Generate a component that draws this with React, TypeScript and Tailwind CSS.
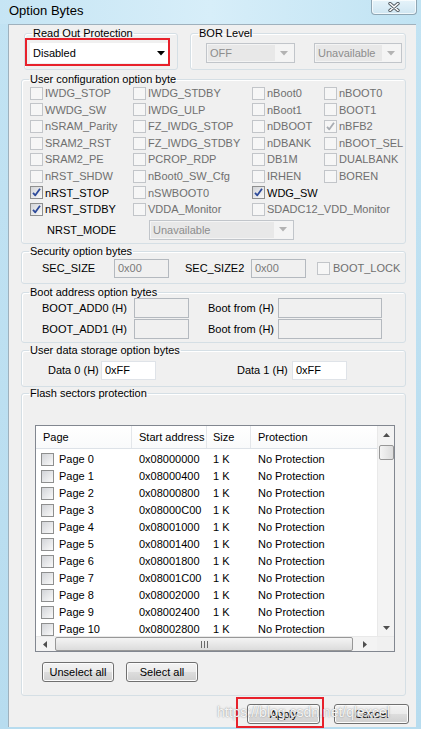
import React from 'react';

type CheckProps = { on?: boolean; off?: boolean };

function Check({ on = false, off = false }: CheckProps) {
  return (
    <span
      className={`relative inline-flex h-[13px] w-[13px] shrink-0 items-center justify-center border ${
        off ? 'border-[#c2c5c9] bg-[#f6f6f6]' : 'border-[#8e8f8f] bg-gradient-to-br from-[#d2d4d8] to-[#fafafa]'
      }`}
    >
      {on && (
        <svg width="11" height="11" viewBox="0 0 11 11" className="absolute">
          <path
            d="M2 5.8 L4.3 8.3 L9 1.8"
            fill="none"
            stroke={off ? '#a8acb2' : '#2d4a9a'}
            strokeWidth="1.8"
            strokeLinejoin="round"
          />
        </svg>
      )}
    </span>
  );
}

function Arrow({ color = '#000' }: { color?: string }) {
  return (
    <svg width="8" height="5" viewBox="0 0 8 5">
      <polygon points="0,0 8,0 4,4.5" fill={color} />
    </svg>
  );
}

function Combo({ text, off = false, className = '' }: { text: string; off?: boolean; className?: string }) {
  if (off) {
    return (
      <div className={`flex h-[20px] items-stretch border border-[#c1c5ca] bg-[#f4f4f4] p-[1px] ${className}`}>
        <div className="flex flex-1 items-center bg-[#e8e8e8] pl-[2px] text-[#8d8d8d]">{text}</div>
        <div className="flex w-[18px] items-center justify-center">
          <Arrow color="#b3b3b3" />
        </div>
      </div>
    );
  }
  return (
    <div className={`flex h-[20px] items-center bg-white pl-[3px] ${className}`}>
      <span className="flex-1">{text}</span>
      <div className="flex w-[14px] items-center justify-center">
        <Arrow />
      </div>
    </div>
  );
}

function Box({ text = '', white = false, className = '' }: { text?: string; white?: boolean; className?: string }) {
  return (
    <div
      className={`flex h-[19px] items-center border pl-[3px] ${
        white ? 'border-[#dfe3e8] bg-white text-black' : 'border-[#b4b9bf] bg-[#f0f0f0] text-[#7a7a7a]'
      } ${className}`}
    >
      {text}
    </div>
  );
}

function Group({ title, className = '', children }: { title: string; className?: string; children?: React.ReactNode }) {
  return (
    <fieldset className={`rounded-[3px] border border-[#d5dfe5] shadow-[inset_1px_1px_0_#ffffff] ${className}`}>
      <legend className="ml-[7px] px-[1px] text-[11px] leading-[12px] text-black">{title}</legend>
      {children}
    </fieldset>
  );
}

function Btn({ label, className = '' }: { label: string; className?: string }) {
  return (
    <button
      className={`flex h-[20px] items-center justify-center rounded-[3px] border border-[#707070] bg-[linear-gradient(#f3f3f3_0%,#ebebeb_50%,#dddddd_51%,#cfcfcf_100%)] text-[11px] text-black shadow-[inset_0_0_0_1px_#fcfcfc] ${className}`}
    >
      {label}
    </button>
  );
}

type Opt = { t: string; on?: boolean; off?: boolean; span?: boolean } | null;

const userRows: Opt[][] = [
  [{ t: 'IWDG_STOP', off: true }, { t: 'IWDG_STDBY', off: true }, { t: 'nBoot0', off: true }, { t: 'nBOOT0', off: true }],
  [{ t: 'WWDG_SW', off: true }, { t: 'IWDG_ULP', off: true }, { t: 'nBoot1', off: true }, { t: 'BOOT1', off: true }],
  [{ t: 'nSRAM_Parity', off: true }, { t: 'FZ_IWDG_STOP', off: true }, { t: 'nDBOOT', off: true }, { t: 'nBFB2', off: true, on: true }],
  [{ t: 'SRAM2_RST', off: true }, { t: 'FZ_IWDG_STDBY', off: true }, { t: 'nDBANK', off: true }, { t: 'nBOOT_SEL', off: true }],
  [{ t: 'SRAM2_PE', off: true }, { t: 'PCROP_RDP', off: true }, { t: 'DB1M', off: true }, { t: 'DUALBANK', off: true }],
  [{ t: 'nRST_SHDW', off: true }, { t: 'nBoot0_SW_Cfg', off: true }, { t: 'IRHEN', off: true }, { t: 'BOREN', off: true }],
  [{ t: 'nRST_STOP', on: true }, { t: 'nSWBOOT0', off: true }, { t: 'WDG_SW', on: true }, null],
  [{ t: 'nRST_STDBY', on: true }, { t: 'VDDA_Monitor', off: true }, { t: 'SDADC12_VDD_Monitor', off: true, span: true }],
];

const pages = Array.from({ length: 11 }, (_, i) => ({
  name: `Page ${i}`,
  addr: '0x' + (0x08000000 + i * 0x400).toString(16).toUpperCase().padStart(8, '0'),
}));

function OptCell({ o }: { o: Opt }) {
  if (!o) return <div />;
  return (
    <div className={`flex items-center gap-[2px] ${o.span ? 'col-span-2' : ''}`}>
      <Check on={o.on} off={o.off} />
      <span className={o.off ? 'whitespace-nowrap text-[#6f6f6f]' : 'whitespace-nowrap text-black'}>{o.t}</span>
    </div>
  );
}

function PageList() {
  return (
    <div className="flex h-[227px] w-[360px] flex-col border border-[#828790] bg-white">
      <div className="flex h-[210px]">
        <div className="w-[341px] overflow-hidden">
          <div className="grid h-[23px] grid-cols-[96px_75px_44px_1fr] border-b border-[#dde2e8] bg-gradient-to-b from-white to-[#f9fafb]">
            <div className="flex items-center border-r border-[#e3e6ea] pl-[7px]">Page</div>
            <div className="flex items-center border-r border-[#e3e6ea] pl-[7px]">Start address</div>
            <div className="flex items-center border-r border-[#e3e6ea] pl-[6px]">Size</div>
            <div className="flex items-center pl-[7px]">Protection</div>
          </div>
          <div className="pt-[2px]">
            {pages.map((p) => (
              <div key={p.name} className="grid h-[17px] grid-cols-[96px_75px_44px_1fr] items-center">
                <div className="flex items-center gap-[5px] pl-[5px]">
                  <Check />
                  <span>{p.name}</span>
                </div>
                <div className="pl-[7px]">{p.addr}</div>
                <div className="pl-[6px]">1 K</div>
                <div className="pl-[7px]">No Protection</div>
              </div>
            ))}
          </div>
        </div>
        <div className="flex w-[17px] flex-col items-center border-l border-[#e9e9e9] bg-[#f3f3f3]">
          <div className="flex h-[17px] items-center justify-center">
            <svg width="7" height="4" viewBox="0 0 7 4">
              <polygon points="0,4 7,4 3.5,0" fill="#4f4f4f" />
            </svg>
          </div>
          <div className="mt-[2px] h-[15px] w-[15px] rounded-[2px] border border-[#979797] bg-gradient-to-r from-[#f4f4f4] to-[#dcdcdc]" />
          <div className="flex-1" />
          <div className="flex h-[17px] items-center justify-center">
            <svg width="7" height="4" viewBox="0 0 7 4">
              <polygon points="0,0 7,0 3.5,4" fill="#4f4f4f" />
            </svg>
          </div>
        </div>
      </div>
      <div className="flex h-[15px] border-t border-[#e9e9e9] bg-[#f3f3f3]">
        <div className="flex w-[341px] items-center">
          <div className="flex w-[17px] items-center justify-center">
            <svg width="4" height="7" viewBox="0 0 4 7">
              <polygon points="4,0 4,7 0,3.5" fill="#4f4f4f" />
            </svg>
          </div>
          <div className="ml-[2px] flex h-[14px] w-[298px] items-center justify-center rounded-[2px] border border-[#979797] bg-gradient-to-b from-[#f4f4f4] to-[#dcdcdc]">
            <div className="flex gap-[2px]">
              <span className="h-[7px] w-[1px] bg-[#6b6b6b]" />
              <span className="h-[7px] w-[1px] bg-[#6b6b6b]" />
              <span className="h-[7px] w-[1px] bg-[#6b6b6b]" />
            </div>
          </div>
          <div className="flex flex-1 items-center justify-center">
            <svg width="4" height="7" viewBox="0 0 4 7">
              <polygon points="0,0 0,7 4,3.5" fill="#4f4f4f" />
            </svg>
          </div>
        </div>
        <div className="flex-1 bg-[#f0f0f0]" />
      </div>
    </div>
  );
}

export default function App() {
  return (
    <div className="relative h-[729px] w-[421px] overflow-hidden bg-gradient-to-b from-[#c2e3f3] to-[#b7dcef] font-['Liberation_Sans',Arial,sans-serif] text-[11px] text-black">
      {/* title bar */}
      <div className="flex h-[24px] items-start justify-between bg-gradient-to-r from-[#c6e5f4] via-[#d7eef9] to-[#c0e3f3]">
        <span className="pl-[9px] pt-[3px] text-[13px] leading-[16px] text-black">Option Bytes</span>
        <div className="mr-[4px] flex h-[15px] w-[46px] items-center justify-center rounded-b-[4px] border-x border-b border-[#8fa6b4] bg-gradient-to-b from-[#e6f3fa] to-[#cfe6f2] shadow-[inset_0_0_0_1px_rgba(255,255,255,0.7)]">
          <svg width="12" height="10" viewBox="0 0 12 10">
            <path d="M2 1.5 L10 8.5 M10 1.5 L2 8.5" stroke="#535b62" strokeWidth="3.4" strokeLinecap="round" />
            <path d="M2 1.5 L10 8.5 M10 1.5 L2 8.5" stroke="#ffffff" strokeWidth="1.6" strokeLinecap="round" />
          </svg>
        </div>
      </div>

      {/* dialog body */}
      <div className="ml-[8px] h-[703px] w-[408px] border-l border-t border-[#9fb1bd] bg-[#f0f0f0]">
        <div className="flex pt-[2px]">
          <Group title="Read Out Protection" className="ml-[15px] h-[43px] w-[154px]">
            <div className="relative ml-[5px] mt-[4px] w-[138px]">
              <Combo text="Disabled" className="w-[138px]" />
              <div className="absolute -bottom-[3px] -left-[5px] -right-[2px] -top-[5px] border-2 border-[#e8212b]" />
            </div>
          </Group>
          <Group title="BOR Level" className="ml-[12px] h-[43px] w-[216px]">
            <div className="ml-[15px] mt-[4px] flex gap-[19px]">
              <Combo text="OFF" off className="w-[89px]" />
              <Combo text="Unavailable" off className="w-[88px]" />
            </div>
          </Group>
        </div>

        <Group title="User configuration option byte" className="ml-[12px] mt-[3px] h-[171px] w-[385px]">
          <div className="grid grid-cols-[103px_119px_72px_1fr] pl-[8px]">
            {userRows.map((row, ri) =>
              row.map((o, ci) => (
                <div key={`${ri}-${ci}`} className={`flex h-[16.6px] items-center ${o && o.span ? 'col-span-2' : ''}`}>
                  <OptCell o={o} />
                </div>
              ))
            )}
          </div>
          <div className="mt-[2px] flex items-center">
            <span className="ml-[25px] w-[102px]">NRST_MODE</span>
            <Combo text="Unavailable" off className="w-[145px]" />
          </div>
        </Group>

        <Group title="Security option bytes" className="ml-[12px] mt-[1px] h-[39px] w-[385px]">
          <div className="mt-[2px] flex items-center">
            <span className="ml-[20px] w-[72px]">SEC_SIZE</span>
            <Box text="0x00" className="w-[55px]" />
            <span className="ml-[16px] w-[66px]">SEC_SIZE2</span>
            <Box text="0x00" className="w-[55px]" />
            <div className="ml-[11px] flex items-center gap-[3px]">
              <Check off />
              <span className="text-[#6f6f6f]">BOOT_LOCK</span>
            </div>
          </div>
        </Group>

        <Group title="Boot address option bytes" className="ml-[12px] mt-[2px] h-[57px] w-[385px]">
          <div className="flex flex-col gap-[1px]">
            {['BOOT_ADD0 (H)', 'BOOT_ADD1 (H)'].map((l) => (
              <div key={l} className="flex h-[20px] items-center">
                <span className="ml-[20px] w-[92px]">{l}</span>
                <Box className="h-[20px] w-[55px]" />
                <span className="ml-[19px] w-[70px]">Boot from (H)</span>
                <Box className="h-[20px] w-[104px]" />
              </div>
            ))}
          </div>
        </Group>

        <Group title="User data storage option bytes" className="ml-[12px] mt-[1px] h-[43px] w-[385px]">
          <div className="mt-[5px] flex items-center">
            <span className="ml-[26px] w-[53px]">Data 0 (H)</span>
            <Box text="0xFF" white className="w-[55px]" />
            <span className="ml-[81px] w-[55px]">Data 1 (H)</span>
            <Box text="0xFF" white className="w-[55px]" />
          </div>
        </Group>

        <Group title="Flash sectors protection" className="ml-[12px] h-[309px] w-[385px]">
          <div className="ml-[13px] mt-[26px]">
            <PageList />
          </div>
          <div className="ml-[20px] mt-[10px] flex gap-[12px]">
            <Btn label="Unselect all" className="w-[72px]" />
            <Btn label="Select all" className="w-[72px]" />
          </div>
        </Group>

        <div className="mt-[8px] flex">
          <div className="relative ml-[238px]">
            <Btn label="Apply" className="w-[73px]" />
            <div className="absolute -bottom-[4px] -left-[11px] -right-[4px] -top-[7px] border-2 border-[#e8212b]" />
          </div>
          <Btn label="Cancel" className="ml-[14px] w-[75px]" />
        </div>
      </div>

      {/* blog watermark */}
      <div className="pointer-events-none absolute left-[217px] top-[702px] text-[14px] text-white/90 [text-shadow:0_0_1.5px_rgba(90,90,90,0.8)]">
        https://blog.csdn.net/qlexcel
      </div>
    </div>
  );
}
